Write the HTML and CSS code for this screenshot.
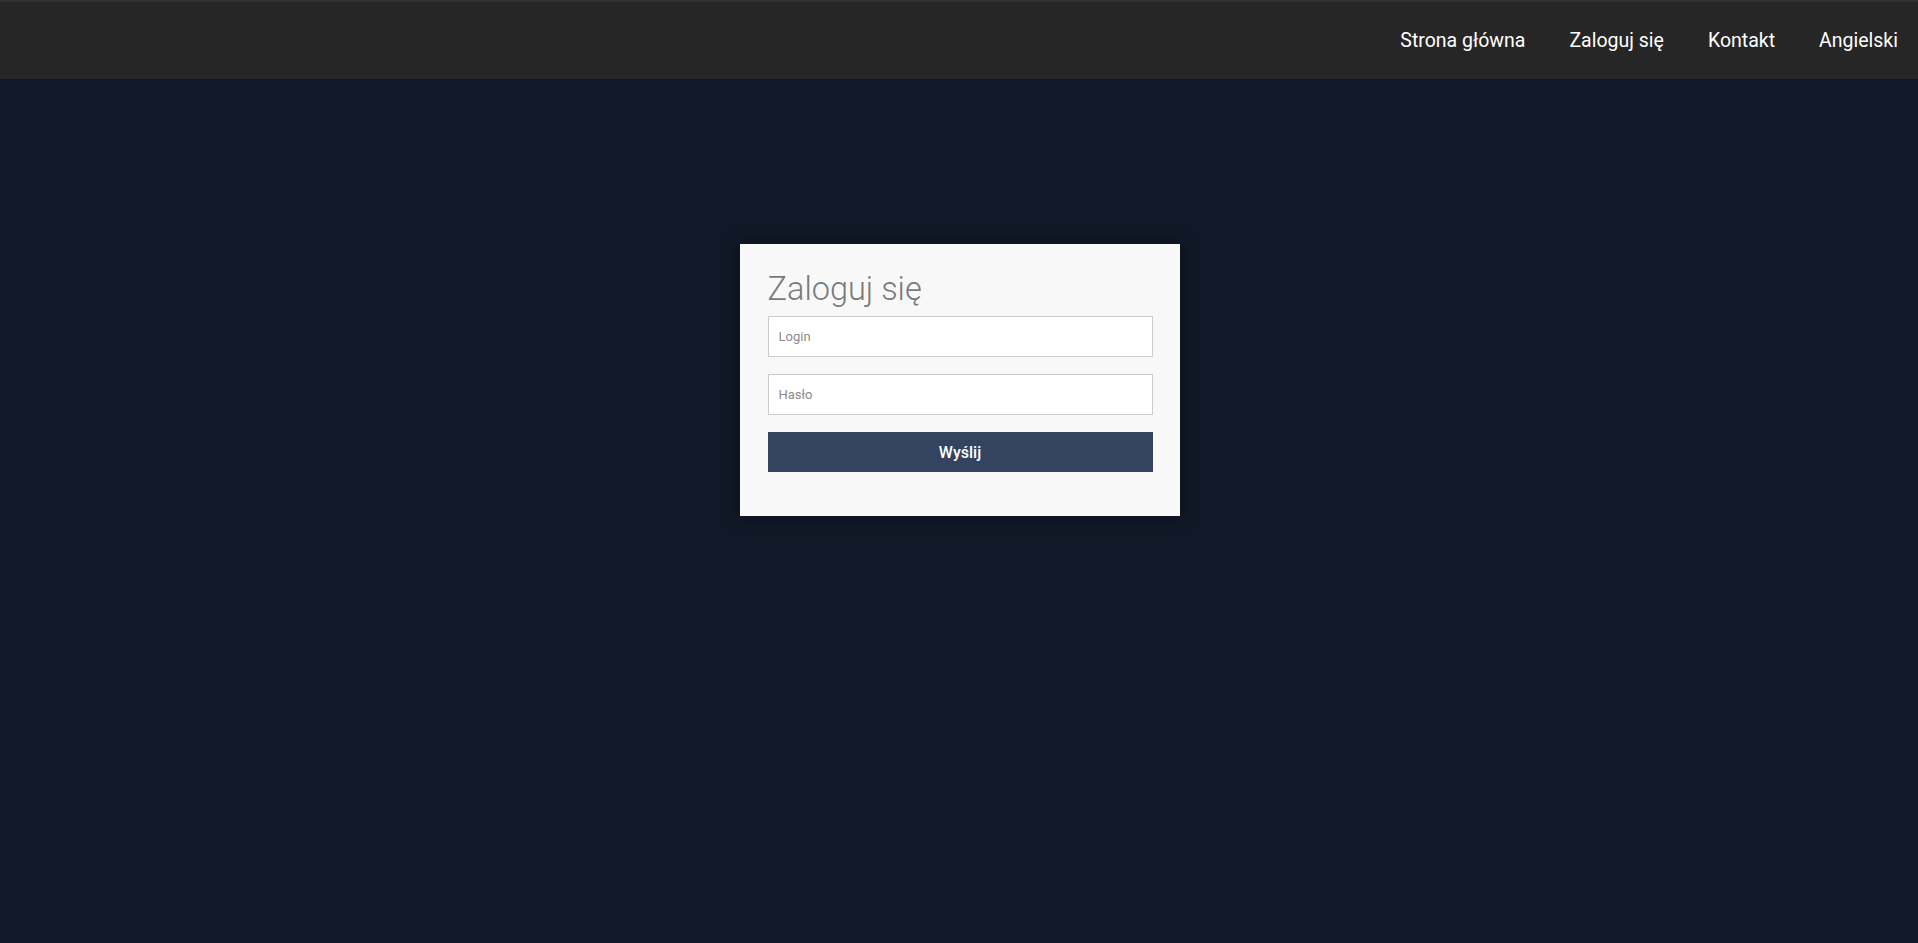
FILE: index.html
```html
<!DOCTYPE html>
<html lang="pl">
<head>
<meta charset="utf-8">
<title>Zaloguj się</title>
<link rel="stylesheet" href="styles.css">
</head>
<body>
<header class="topbar">
  <nav class="nav">
    <a class="nav-link" href="#">Strona główna</a>
    <a class="nav-link" href="#">Zaloguj się</a>
    <a class="nav-link" href="#">Kontakt</a>
    <a class="nav-link" href="#">Angielski</a>
  </nav>
</header>
<main class="main">
  <form class="card">
    <h2 class="card-title">Zaloguj się</h2>
    <input class="field" type="text" placeholder="Login">
    <input class="field" type="password" placeholder="Hasło">
    <button class="submit" type="button">Wyślij</button>
  </form>
</main>
</body>
</html>
```
FILE: styles.css
```css
html, body {
  margin: 0;
  padding: 0;
  height: 100%;
}
body {
  font-family: Roboto, "Liberation Sans", sans-serif;
  background: #111827;
  display: flex;
  flex-direction: column;
}
.topbar {
  height: 77px;
  background: #262626;
  border-top: 2px solid #2f2f2f;
  display: flex;
  justify-content: flex-end;
  align-items: center;
  flex-shrink: 0;
}
.nav {
  display: flex;
  gap: 44px;
  padding-right: 20px;
}
.nav-link {
  color: #ffffff;
  text-decoration: none;
  font-size: 19.5px;
  font-weight: 400;
}
.main {
  flex: 1;
  background: #111827;
  display: flex;
  justify-content: center;
  align-items: flex-start;
  padding-top: 165px;
}
.card {
  width: 385px;
  margin-left: 1px;
  background: #f8f8f8;
  padding: 24px 27px 44px 28px;
  display: flex;
  flex-direction: column;
  box-shadow: 0 0 18px rgba(0, 0, 0, 0.35);
}
.card-title {
  margin: 0 0 6px;
  font-size: 32.5px;
  line-height: 42px;
  font-weight: 300;
  color: #7a7a7a;
}
.field {
  box-sizing: border-box;
  height: 41px;
  margin: 0 0 17px;
  padding: 0 10px;
  border: 1px solid #cccccc;
  background: #ffffff;
  font-family: Roboto, "Liberation Sans", sans-serif;
  font-size: 13px;
  color: #555;
  outline: none;
}
.field::placeholder {
  color: #8a8a8a;
}
.submit {
  height: 40px;
  border: none;
  background: #344360;
  color: #ffffff;
  font-family: Roboto, "Liberation Sans", sans-serif;
  font-size: 16px;
  font-weight: 500;
  padding: 0;
  cursor: pointer;
}
```
